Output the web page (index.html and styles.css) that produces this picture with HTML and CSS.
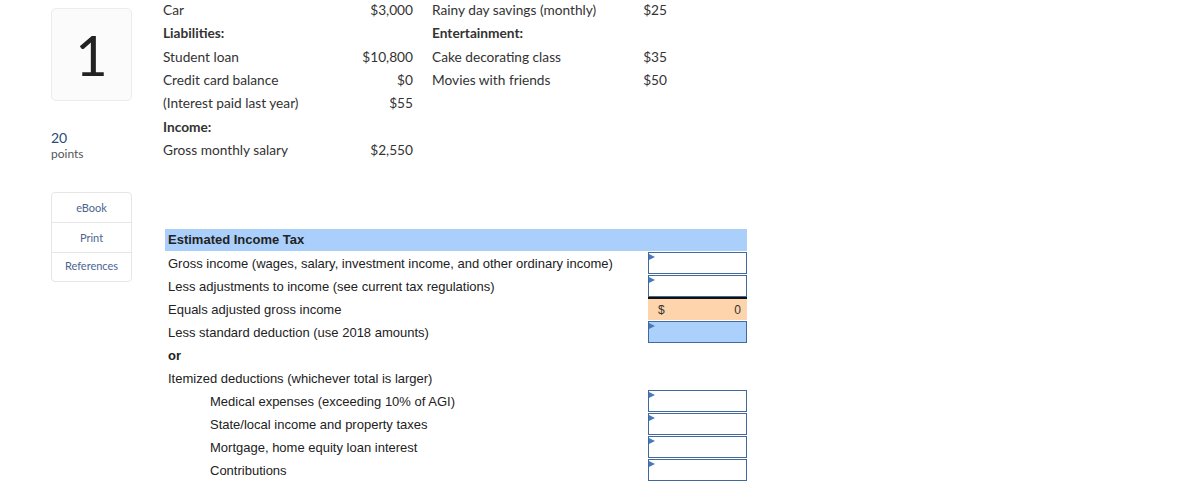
FILE: index.html
```
<!DOCTYPE html>
<html>
<head>
<meta charset="utf-8">
<link rel="stylesheet" href="styles.css">
</head>
<body>
<div class="page">
  <aside class="sidebar">
    <div class="qnum">1</div>
    <div class="points"><div class="pts-num">20</div><div class="pts-label">points</div></div>
    <div class="links">
      <div class="link">eBook</div>
      <div class="link">Print</div>
      <div class="link">References</div>
    </div>
  </aside>
  <main class="content">
    <div class="facts">
      <div class="c1">Car</div><div class="c2">$3,000</div><div class="c3">Rainy day savings (monthly)</div><div class="c4">$25</div>
      <div class="c1 b">Liabilities:</div><div class="c2"></div><div class="c3 b">Entertainment:</div><div class="c4"></div>
      <div class="c1">Student loan</div><div class="c2">$10,800</div><div class="c3">Cake decorating class</div><div class="c4">$35</div>
      <div class="c1">Credit card balance</div><div class="c2">$0</div><div class="c3">Movies with friends</div><div class="c4">$50</div>
      <div class="c1">(Interest paid last year)</div><div class="c2">$55</div><div class="c3"></div><div class="c4"></div>
      <div class="c1 b">Income:</div><div class="c2"></div><div class="c3"></div><div class="c4"></div>
      <div class="c1">Gross monthly salary</div><div class="c2">$2,550</div><div class="c3"></div><div class="c4"></div>
    </div>

    <div class="sheet">
      <div class="sheet-head">Estimated Income Tax</div>
      <div class="row"><div class="lbl">Gross income (wages, salary, investment income, and other ordinary income)</div><div class="inp"></div></div>
      <div class="row"><div class="lbl">Less adjustments to income (see current tax regulations)</div><div class="inp"></div></div>
      <div class="row"><div class="lbl">Equals adjusted gross income</div><div class="calc"><span>$</span><span>0</span></div></div>
      <div class="row"><div class="lbl">Less standard deduction (use 2018 amounts)</div><div class="inp blue"></div></div>
      <div class="row"><div class="lbl b">or</div></div>
      <div class="row"><div class="lbl">Itemized deductions (whichever total is larger)</div></div>
      <div class="row"><div class="lbl ind">Medical expenses (exceeding 10% of AGI)</div><div class="inp"></div></div>
      <div class="row"><div class="lbl ind">State/local income and property taxes</div><div class="inp"></div></div>
      <div class="row"><div class="lbl ind">Mortgage, home equity loan interest</div><div class="inp"></div></div>
      <div class="row"><div class="lbl ind">Contributions</div><div class="inp"></div></div>
    </div>
  </main>
</div>
</body>
</html>
```

FILE: styles.css
```
html, body { margin: 0; padding: 0; background: #fff; }
body { font-family: Lato, "Open Sans", sans-serif; color: #333; }
.page { display: flex; align-items: flex-start; padding-left: 51px; }
.sidebar { width: 81px; padding-top: 8px; display: flex; flex-direction: column; }
.qnum {
  height: 91px; border: 1px solid #ececec; border-radius: 5px; background: #fbfbfb;
  display: flex; align-items: center; justify-content: center;
  font-size: 56px; font-weight: 400; color: #222; line-height: 1;
}
.points { margin-top: 28px; }
.pts-num { font-size: 14px; color: #284b78; line-height: 17px; }
.pts-label { font-size: 12px; color: #555; line-height: 15px; }
.links { margin-top: 31px; border: 1px solid #e6e6e6; border-radius: 4px; }
.link { font-size: 11px; color: #4b6592; text-align: center; height: 29px; line-height: 29px; }
.link + .link { border-top: 1px solid #e6e6e6; }
.link:last-child { height: 28px; line-height: 26px; }

.content { margin-left: 31px; }
.facts {
  margin-top: -2px;
  display: grid; grid-template-columns: 175px 75px 189px 65px;
  grid-auto-rows: 23.33px; font-size: 13.7px; color: #333;
}
.facts > div { line-height: 23.33px; white-space: nowrap; }
.facts .c2, .facts .c4 { text-align: right; }
.facts .c3 { padding-left: 19px; }
.facts .b { font-weight: 700; }

.sheet {
  margin-top: 68px; margin-left: 2px; width: 582px;
  font-family: "Liberation Sans", Arial, sans-serif; font-size: 13px; color: #222;
}
.sheet-head {
  height: 22px; line-height: 22px; margin-bottom: 1px; background: #aacffb;
  font-weight: 700; padding-left: 3px;
}
.row { display: flex; height: 23px; }
.lbl { flex: 1; padding-left: 3px; line-height: 23px; white-space: nowrap; }
.lbl.b { font-weight: 700; }
.lbl.ind { padding-left: 45px; }
.inp {
  position: relative; width: 97px; height: 20px; border: 1px solid #41699b; background: #fff;
}
.inp::before {
  content: ""; position: absolute; left: 0; top: 1px;
  border-left: 6px solid #4a79b9; border-top: 3.5px solid transparent; border-bottom: 3.5px solid transparent;
}
.inp.blue { background: #aad0fb; }
.calc {
  width: 99px; height: 23px; margin-top: -1px; border-top: 2px solid #111; background: #fdd4ab;
  display: flex; justify-content: space-between; align-items: center; padding: 0 6px 0 10px; box-sizing: border-box;
  font-size: 12px; color: #333;
}
```
